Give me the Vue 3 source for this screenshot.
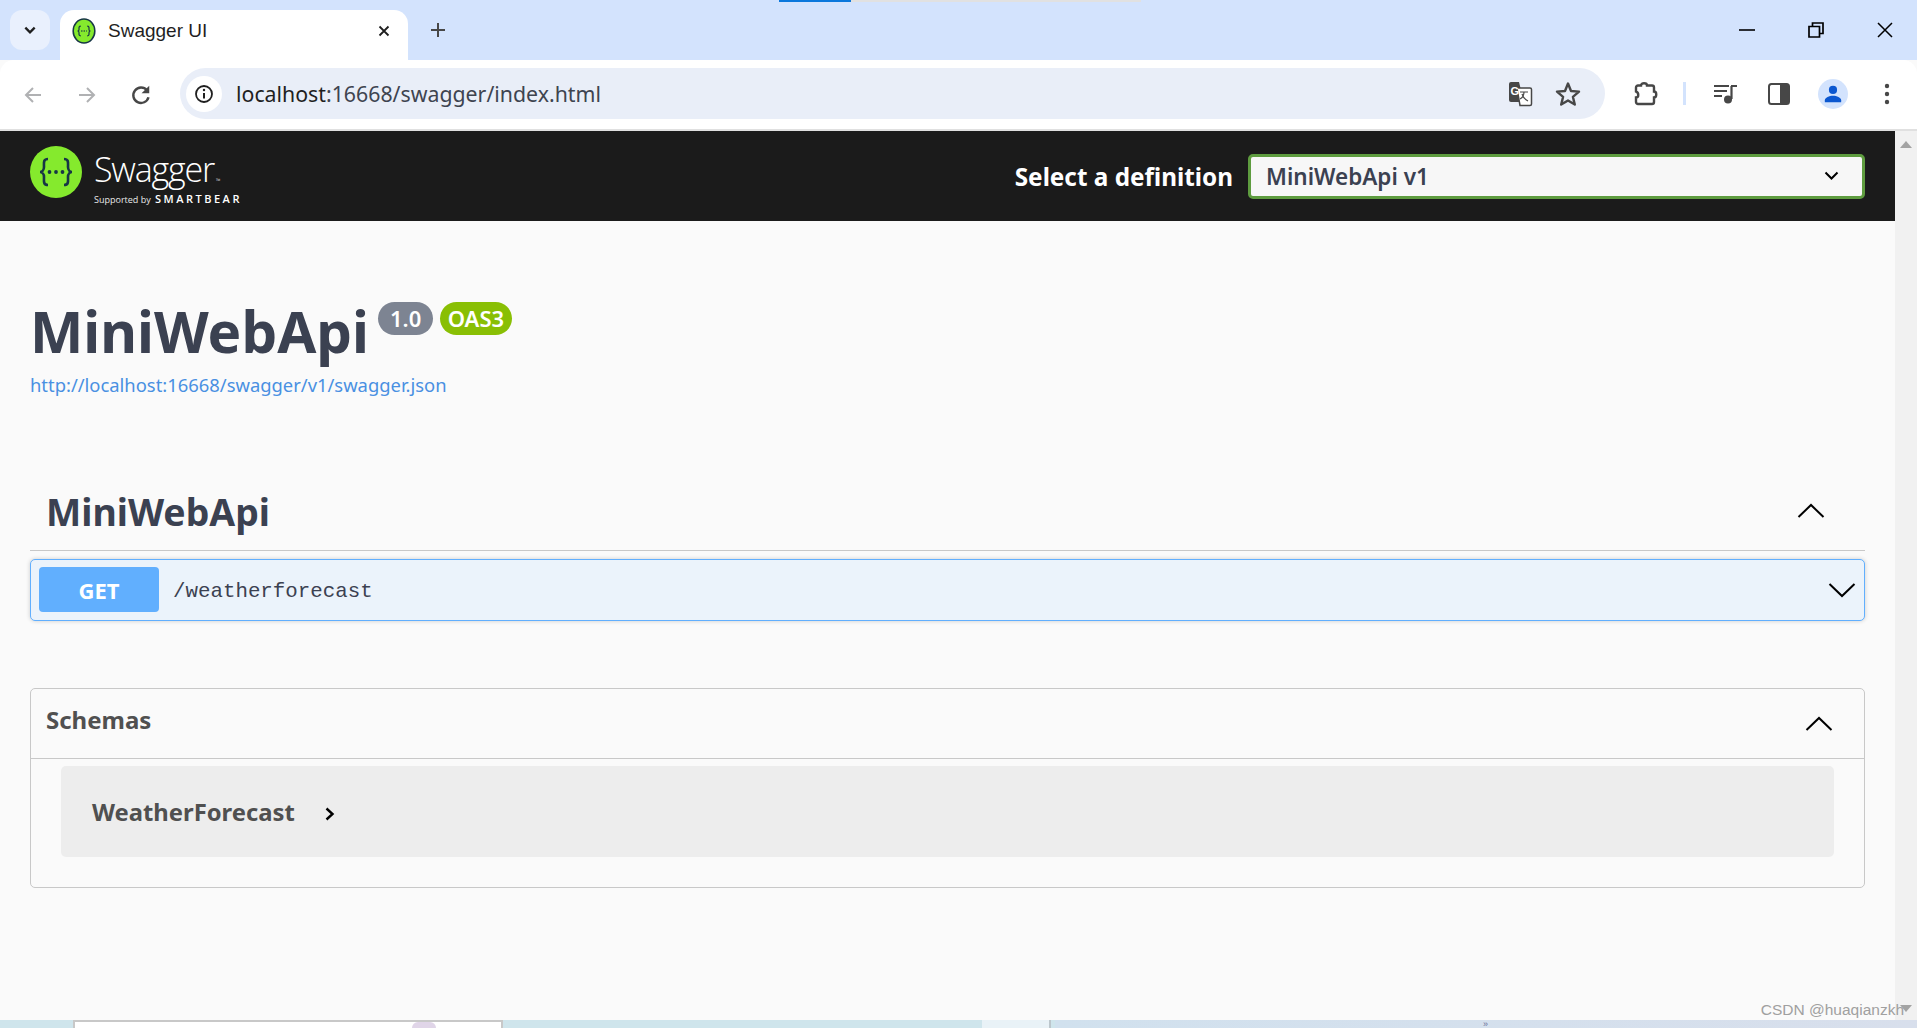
<script setup>
const title = 'MiniWebApi'
</script>

<template>
  <div class="window">
    <div class="tabstrip">
      <div class="progress"><i class="p-blue"></i><i class="p-gray"></i></div>
      <button class="tabs-btn">
        <svg width="14" height="14" viewBox="0 0 12 12"><path d="M2 4l4 4 4-4" fill="none" stroke="#1f1f1f" stroke-width="2"/></svg>
      </button>
      <div class="tab">
        <svg class="favicon" width="24" height="26" viewBox="0 0 22 24">
          <ellipse cx="11" cy="12" rx="10" ry="11" fill="#85ea2d" stroke="#173646" stroke-width="1.4"/>
          <path d="M8 7.500c-2 0-1.600 1.500-1.600 3 0 1-.6 1.500-1.400 1.500.8 0 1.400.5 1.400 1.500 0 1.500-.4 3 1.600 3M14 7.500c2 0 1.600 1.500 1.600 3 0 1 .6 1.500 1.400 1.500-.8 0-1.400.5-1.400 1.500 0 1.500.4 3-1.600 3" fill="none" stroke="#173646" stroke-width="1.100"/>
          <path d="M8.500 12h5" stroke="#173646" stroke-width="1.200" stroke-dasharray="1 1.200"/>
        </svg>
        <span class="tab-title">Swagger UI</span>
        <svg class="tab-close" width="12" height="12" viewBox="0 0 12 12"><path d="M1.500 1.500l9 9M10.500 1.500l-9 9" stroke="#1f1f1f" stroke-width="1.800"/></svg>
      </div>
      <svg class="newtab" width="16" height="16" viewBox="0 0 16 16"><path d="M8 1v14M1 8h14" stroke="#474747" stroke-width="2"/></svg>
      <div class="winctl">
        <svg width="16" height="16" viewBox="0 0 16 16"><path d="M0 8h16" stroke="#000" stroke-width="1.600"/></svg>
        <svg width="16" height="16" viewBox="0 0 16 16"><path d="M1 4.500h10.500v10.500H1zM4.500 4.500V1h10.500v10.500h-3.500" fill="none" stroke="#000" stroke-width="1.700"/></svg>
        <svg width="16" height="16" viewBox="0 0 16 16"><path d="M1 1l14 14M15 1L1 15" stroke="#000" stroke-width="1.500"/></svg>
      </div>
    </div>

    <div class="toolbar">
      <svg class="nav nav-back" width="20" height="20" viewBox="0 0 20 20"><path d="M18 10H3M10 3l-7 7 7 7" fill="none" stroke="#b0b1b3" stroke-width="2"/></svg>
      <svg class="nav" width="20" height="20" viewBox="0 0 20 20"><path d="M2 10h15M10 3l7 7-7 7" fill="none" stroke="#b0b1b3" stroke-width="2"/></svg>
      <svg class="nav reload" width="22" height="22" viewBox="0 0 20 20"><path d="M16.800 12a7 7 0 1 1-1.400-6.300" fill="none" stroke="#474747" stroke-width="2.200"/><path d="M17.500 1.500v7h-7z" fill="#474747"/></svg>
      <div class="omnibox">
        <span class="info">
          <svg width="20" height="20" viewBox="0 0 20 20"><circle cx="10" cy="10" r="8" fill="none" stroke="#1f1f1f" stroke-width="1.800"/><path d="M10 9v5.500" stroke="#1f1f1f" stroke-width="2"/><circle cx="10" cy="6" r="1.200" fill="#1f1f1f"/></svg>
        </span>
        <span class="url"><span class="url-host">localhost</span>:16668/swagger/index.html</span>
        <svg class="omni-ic" width="26" height="26" viewBox="0 0 26 26">
          <path d="M2 3a2 2 0 0 1 2-2h8l5 20H4a2 2 0 0 1-2-2z" fill="#474747"/>
          <path d="M10 7h13a1.500 1.500 0 0 1 1.500 1.500V23a1.500 1.500 0 0 1-1.500 1.500H13l-3-17z" fill="#fff" stroke="#474747" stroke-width="1.500"/>
          <text x="3.500" y="14" class="tr-g">G</text>
          <path d="M13 11h8M17 11c0 3-2 6-4 7M15 13c1 3 4 6 6 7" fill="none" stroke="#474747" stroke-width="1.200"/>
        </svg>
        <svg class="omni-ic star" width="26" height="26" viewBox="0 0 26 26"><path d="M13 2.500l3 7.500 8 .6-6.100 5.200 1.900 7.800L13 19.400l-6.800 4.200 1.900-7.800L2 10.600l8-.6z" fill="none" stroke="#474747" stroke-width="2.400" stroke-linejoin="round"/></svg>
      </div>
      <svg class="tool ext" width="26" height="26" viewBox="0 0 26 26"><path d="M9 4.500c0-3 6-3 6 0h5a2 2 0 0 1 2 2v4c3 0 3 6 0 6v4.500a2 2 0 0 1-2 2H6a2 2 0 0 1-2-2v-4.500c3 0 3-5 0-6V6.500a2 2 0 0 1 2-2z" fill="none" stroke="#474747" stroke-width="2.400"/></svg>
      <i class="tb-sep"></i>
      <svg class="tool media" width="24" height="22" viewBox="0 0 24 22"><path d="M0 3h15M0 8h13M0 13h8" stroke="#474747" stroke-width="2"/><path d="M17 3h6M17.500 3v13" stroke="#474747" stroke-width="2.200" fill="none"/><circle cx="14" cy="16.500" r="4" fill="#474747"/></svg>
      <svg class="tool panel" width="22" height="22" viewBox="0 0 22 22"><rect x="1" y="1" width="20" height="20" rx="2.500" fill="#fff" stroke="#474747" stroke-width="2"/><path d="M12 1h7a2 2 0 0 1 2 2v16a2 2 0 0 1-2 2h-7z" fill="#474747"/></svg>
      <span class="avatar">
        <svg width="22" height="22" viewBox="0 0 22 22"><circle cx="11" cy="6.500" r="4.500" fill="#0b57d0"/><path d="M2 20v-2c0-3 5-5 9-5s9 2 9 5v2z" fill="#0b57d0"/></svg>
      </span>
      <svg class="tool dots" width="6" height="22" viewBox="0 0 6 22"><circle cx="3" cy="3" r="2.200" fill="#474747"/><circle cx="3" cy="11" r="2.200" fill="#474747"/><circle cx="3" cy="19" r="2.200" fill="#474747"/></svg>
    </div>

    <div class="viewport">
      <div class="page">
        <header class="topbar">
          <div class="logo">
            <svg width="52" height="52" viewBox="0 0 52 52">
              <circle cx="26" cy="26" r="26" fill="#85ea2d"/>
              <path d="M18 13c-5 0-4 4-4 8 0 3-2 5-4 5 2 0 4 2 4 5 0 4-1 8 4 8M34 13c5 0 4 4 4 8 0 3 2 5 4 5-2 0-4 2-4 5 0 4 1 8-4 8" fill="none" stroke="#173646" stroke-width="2.600"/>
              <circle cx="19.500" cy="26" r="1.900" fill="#173646"/><circle cx="26" cy="26" r="1.900" fill="#173646"/><circle cx="32.500" cy="26" r="1.900" fill="#173646"/>
            </svg>
            <div class="logo-text">
              <div class="logo-name">Swagger<sup>™</sup></div>
              <div class="logo-sub">Supported by <b>SMARTBEAR</b></div>
            </div>
          </div>
          <div class="definition">
            <label>Select a definition</label>
            <div class="select">
              <span>MiniWebApi v1</span>
              <svg width="15" height="10" viewBox="0 0 15 10"><path d="M1.500 1.500l6 6 6-6" fill="none" stroke="#000" stroke-width="2"/></svg>
            </div>
          </div>
        </header>

        <main class="content">
          <section class="info-block">
            <div class="title-row">
              <h1>{{ title }}</h1>
              <span class="badge version">1.0</span>
              <span class="badge oas">OAS3</span>
            </div>
            <a class="spec-link">http://localhost:16668/swagger/v1/swagger.json</a>
          </section>

          <section class="tag">
            <div class="tag-head">
              <h2>{{ title }}</h2>
              <svg width="28" height="16" viewBox="0 0 28 16"><path d="M1.500 14L14 2l12.500 12" fill="none" stroke="#000" stroke-width="2"/></svg>
            </div>
            <div class="opblock">
              <span class="method">GET</span>
              <span class="path">/weatherforecast</span>
              <svg class="op-arrow" width="28" height="16" viewBox="0 0 28 16"><path d="M1.500 2L14 14 26.500 2" fill="none" stroke="#000" stroke-width="2"/></svg>
            </div>
          </section>

          <section class="schemas">
            <div class="schemas-head">
              <h4>Schemas</h4>
              <svg width="28" height="16" viewBox="0 0 28 16"><path d="M1.500 14L14 2l12.500 12" fill="none" stroke="#000" stroke-width="2"/></svg>
            </div>
            <div class="model">
              <span class="model-name">WeatherForecast</span>
              <svg class="model-arrow" width="12" height="16" viewBox="0 0 12 16"><path d="M2.500 2.500L8.500 8l-6 5.500" fill="none" stroke="#000" stroke-width="2.400"/></svg>
            </div>
          </section>
        </main>
      </div>
      <div class="scrollbar">
        <i class="sb-up"></i>
        <i class="sb-down"></i>
      </div>
      <span class="watermark">CSDN @huaqianzkh</span>
    </div>

    <div class="taskstrip">
      <i class="ts-a"></i>
      <i class="ts-white"><b class="ts-blob"></b></i>
      <i class="ts-b"></i>
      <i class="ts-light"></i>
      <i class="ts-c"><span class="ts-more">»</span></i>
    </div>
  </div>
</template>

<style>
html, body { margin: 0; overflow: hidden; background: #fafafa; }
</style>

<style scoped>
.window { width: 1917px; height: 1028px; display: flex; flex-direction: column; overflow: hidden; font-family: "Noto Sans", "Noto Sans CJK SC", sans-serif; }
.tabstrip { height: 60px; background: #d3e3fd; display: flex; align-items: flex-start; position: relative; flex: none; }
.progress { position: absolute; top: 0; left: 779px; display: flex; height: 2px; }
.p-blue { width: 72px; background: #0b78dc; }
.p-gray { width: 290px; background: #e1e1e1; }
.tabs-btn { width: 40px; height: 40px; margin: 10px 0 0 10px; border: 0; border-radius: 12px; background: #e9f0fd; display: flex; align-items: center; justify-content: center; padding: 0; }
.tab { width: 348px; height: 50px; margin: 10px 0 0 10px; padding: 0 18px 0 12px; box-sizing: border-box; background: #fff; border-radius: 14px 14px 0 0; display: flex; align-items: center; }
.favicon { margin-bottom: 9px; }
.tab-title { flex: 1; margin: 0 0 8px 12px; font-size: 19px; color: #1f1f1f; font-family: "Liberation Sans", sans-serif; }
.tab-close { margin-bottom: 9px; }
.newtab { margin: 22px 0 0 22px; }
.winctl { margin-left: auto; display: flex; gap: 53px; margin-top: 22px; margin-right: 24px; }
.toolbar { height: 69px; flex: none; background: #fff; display: flex; align-items: center; border-radius: 14px 14px 0 0; padding-left: 23px; border-bottom: 2px solid #e0e0e0; position: relative; }
.nav { margin-right: 35px; }
.nav-back { margin-right: 34px; }
.reload { margin-right: 28px; margin-left: -2px; }
.omnibox { width: 1425px; height: 51px; border-radius: 26px; background: #e9eef8; display: flex; align-items: center; flex: none; margin-bottom: 2px; }
.info { width: 36px; height: 36px; border-radius: 50%; background: #fff; margin-left: 6px; display: flex; align-items: center; justify-content: center; }
.url { flex: 1; margin-left: 14px; font-size: 21.300px; color: #3e4450; }
.url-host { color: #1f1f1f; }
.omni-ic { flex: none; margin-left: -3px; }
.tr-g { font: 700 11px "Liberation Sans", sans-serif; fill: #fff; }
.star { margin: 0 24px 0 22px; }
.tool { flex: none; margin-bottom: 2px; }
.ext { margin-left: 27px; }
.tb-sep { width: 3px; height: 23px; background: #d3e3fd; margin: 0 28px 2px 25px; flex: none; }
.panel { margin-left: 30px; }
.avatar { width: 30px; height: 30px; border-radius: 50%; background: #d3e3fd; display: flex; align-items: center; justify-content: center; margin: 0 36px 2px 28px; flex: none; }
.avatar svg { width: 20px; height: 20px; }
.viewport { flex: 1; display: flex; position: relative; min-height: 0; background: #fafafa; }
.page { flex: 1; min-width: 0; }
.topbar { height: 90px; background: #1b1b1b; display: flex; align-items: center; justify-content: space-between; padding: 0 30px; }
.logo { display: flex; align-items: center; gap: 12px; color: #fff; margin-bottom: 8px; }
.logo-text { display: flex; flex-direction: column; }
.logo-name { font-family: "Open Sans", sans-serif; font-size: 34px; line-height: 36px; font-weight: 300; letter-spacing: -1.200px; margin-top: 13px; }
.logo-name sup { font-size: 6px; vertical-align: -1px; letter-spacing: 0; margin-left: 2px; }
.logo-sub { font-size: 9px; line-height: 12px; margin-top: -6px; font-family: "Open Sans", sans-serif; color: #e8e8e8; }
.logo-sub b { font-size: 11px; letter-spacing: 2.500px; font-weight: 600; margin-left: 2px; color: #fff; }
.definition { display: flex; align-items: center; gap: 15px; }
.definition label { font-size: 24.300px; font-weight: 700; color: #fff; }
.select { width: 617px; height: 45px; box-sizing: border-box; border: 3px solid #5e9c3f; border-radius: 5px; background: #f7f7f7; display: flex; align-items: center; justify-content: space-between; padding: 0 23px 0 15px; font-size: 22.500px; font-weight: 600; color: #3b4151; }
.content { padding: 0 30px; }
.info-block { padding-top: 75px; }
.title-row { display: flex; align-items: flex-start; }
h1 { margin: 0; font-size: 56.600px; line-height: 70px; font-weight: 700; color: #3b4151; }
.badge { height: 33px; border-radius: 17px; color: #fff; font-size: 22px; font-weight: 600; line-height: 33px; padding: 0 7.500px; margin-top: 6px; }
.version { background: #7d8492; margin-left: 9px; padding: 0 12px; }
.oas { background: #89bf04; margin-left: 7px; }
.spec-link { display: block; font-size: 18.400px; color: #4990e2; line-height: 28px; margin-top: 5px; }
.tag { margin-top: 81px; }
.tag-head { height: 71px; box-sizing: border-box; border-bottom: 1px solid #c8c8c8; display: flex; align-items: center; justify-content: space-between; padding: 0 40px 8px 16px; }
h2 { margin: 0; font-size: 37.400px; font-weight: 700; color: #3b4151; }
.opblock { height: 62px; margin-top: 8px; box-sizing: border-box; border: 1.500px solid #61affe; border-radius: 5px; background: #ebf3fb; display: flex; align-items: center; padding: 0 8px; box-shadow: 0 0 4px rgba(0,0,0,.19); }
.method { width: 120px; height: 45px; background: #61affe; border-radius: 4px; color: #fff; font-size: 22px; font-weight: 700; display: flex; align-items: center; justify-content: center; flex: none; margin-bottom: 1px; }
.path { flex: 1; margin: 2px 0 0 14px; font-family: "Liberation Mono", "DejaVu Sans Mono", monospace; font-size: 20.800px; color: #3b4151; }
.schemas { margin-top: 67px; height: 200px; box-sizing: border-box; border: 1.500px solid #c8c8c8; border-radius: 5px; }
.schemas-head { height: 70px; box-sizing: border-box; border-bottom: 1.500px solid #c8c8c8; display: flex; align-items: center; justify-content: space-between; padding: 0 31px 0 15px; }
h4 { margin: 0 0 9px; font-size: 24px; font-weight: 700; color: #505050; }
.model { margin: 7px 30px 0; height: 91px; background: #ededed; border-radius: 5px; display: flex; align-items: center; gap: 29px; padding-left: 31px; }
.model-name { font-size: 23.800px; font-weight: 700; color: #505050; }
.model-arrow { margin-top: 5px; }
.scrollbar { width: 22px; flex: none; background: #f1f1f1; display: flex; flex-direction: column; justify-content: space-between; align-items: center; padding: 10px 0 8px; box-sizing: border-box; }
.sb-up { border: 6px solid transparent; border-bottom: 7px solid #a3a3a3; border-top: 0; }
.sb-down { border: 6px solid transparent; border-top: 7px solid #a3a3a3; border-bottom: 0; }
.watermark { position: absolute; right: 13px; bottom: 1px; font: 15.500px "Liberation Sans", sans-serif; color: #a0a0a0; }
.taskstrip { height: 8px; flex: none; display: flex; background: #cfe5ec; }
.ts-a { width: 73px; flex: none; }
.ts-white { width: 430px; flex: none; background: #fff; border: 2px solid #c8c8c8; border-bottom: 0; box-sizing: border-box; position: relative; }
.ts-blob { position: absolute; left: 337px; top: 0; width: 24px; height: 6px; background: #e0d5e8; border-radius: 8px 8px 0 0; }
.ts-b { width: 479px; flex: none; }
.ts-light { width: 67px; flex: none; background: #e9f2f7; border-right: 2px solid #bcc6cc; }
.ts-c { flex: 1; margin-left: 4px; background: linear-gradient(90deg, #d1e1ee, #d8dfec); position: relative; font-style: normal; }
.ts-more { position: absolute; left: 428px; top: 0; font: 9px/8px "Liberation Sans", sans-serif; color: #6b6f99; }
</style>
